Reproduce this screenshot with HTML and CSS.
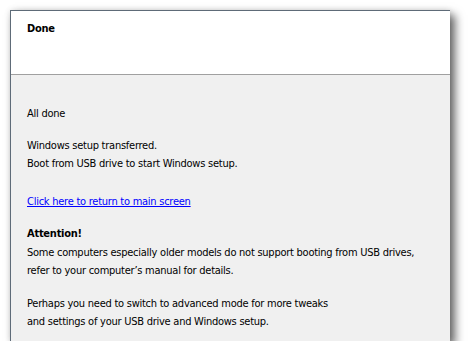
FILE: index.html
```html
<!DOCTYPE html>
<html>
<head>
<meta charset="utf-8">
<link rel="stylesheet" href="styles.css">
</head>
<body>
<div class="window">
  <div class="header">
    <div class="title">Done</div>
  </div>
  <div class="content">
    <p class="line first">All done</p>
    <p class="line gap">Windows setup transferred.</p>
    <p class="line">Boot from USB drive to start Windows setup.</p>
    <p class="line link-gap"><a class="link" href="#">Click here to return to main screen</a></p>
    <p class="line gap strong">Attention!</p>
    <p class="line tight">Some computers especially older models do not support booting from USB drives,</p>
    <p class="line">refer to your computer’s manual for details.</p>
    <p class="line gap-lg">Perhaps you need to switch to advanced mode for more tweaks</p>
    <p class="line">and settings of your USB drive and Windows setup.</p>
  </div>
</div>
</body>
</html>
```
FILE: styles.css
```css
html, body {
  margin: 0;
  padding: 0;
  background: #ffffff;
}
body {
  padding: 10px 0 0 10px;
  font-family: "DejaVu Sans Condensed", "DejaVu Sans", sans-serif;
  font-size: 11px;
  letter-spacing: -0.25px;
  color: #000;
}
.window {
  width: 440px;
  height: 331px;
  box-sizing: border-box;
  border-top: 1px solid #5e6b78;
  border-left: 1px solid #5e6b78;
  background: #f0f0f0;
  box-shadow: 5px 5px 9px rgba(0,0,0,0.6), 0 0 6px rgba(0,0,0,0.12);
  display: flex;
  flex-direction: column;
}
.header {
  height: 64px;
  background: #ffffff;
  border-bottom: 1px solid #a0a0a0;
  padding: 11px 0 0 16px;
  box-sizing: border-box;
}
.title {
  font-weight: bold;
  line-height: 14px;
}
.content {
  padding: 30px 0 0 16px;
}
.line {
  margin: 0;
  line-height: 18px;
  white-space: nowrap;
}
.gap { margin-top: 14px; }
.gap-lg { margin-top: 15px; }
.tight { margin-top: 1px; }
.link-gap { margin-top: 20px; }
.strong { font-weight: bold; }
.link {
  color: #0000ff;
  text-decoration: underline;
}
```
